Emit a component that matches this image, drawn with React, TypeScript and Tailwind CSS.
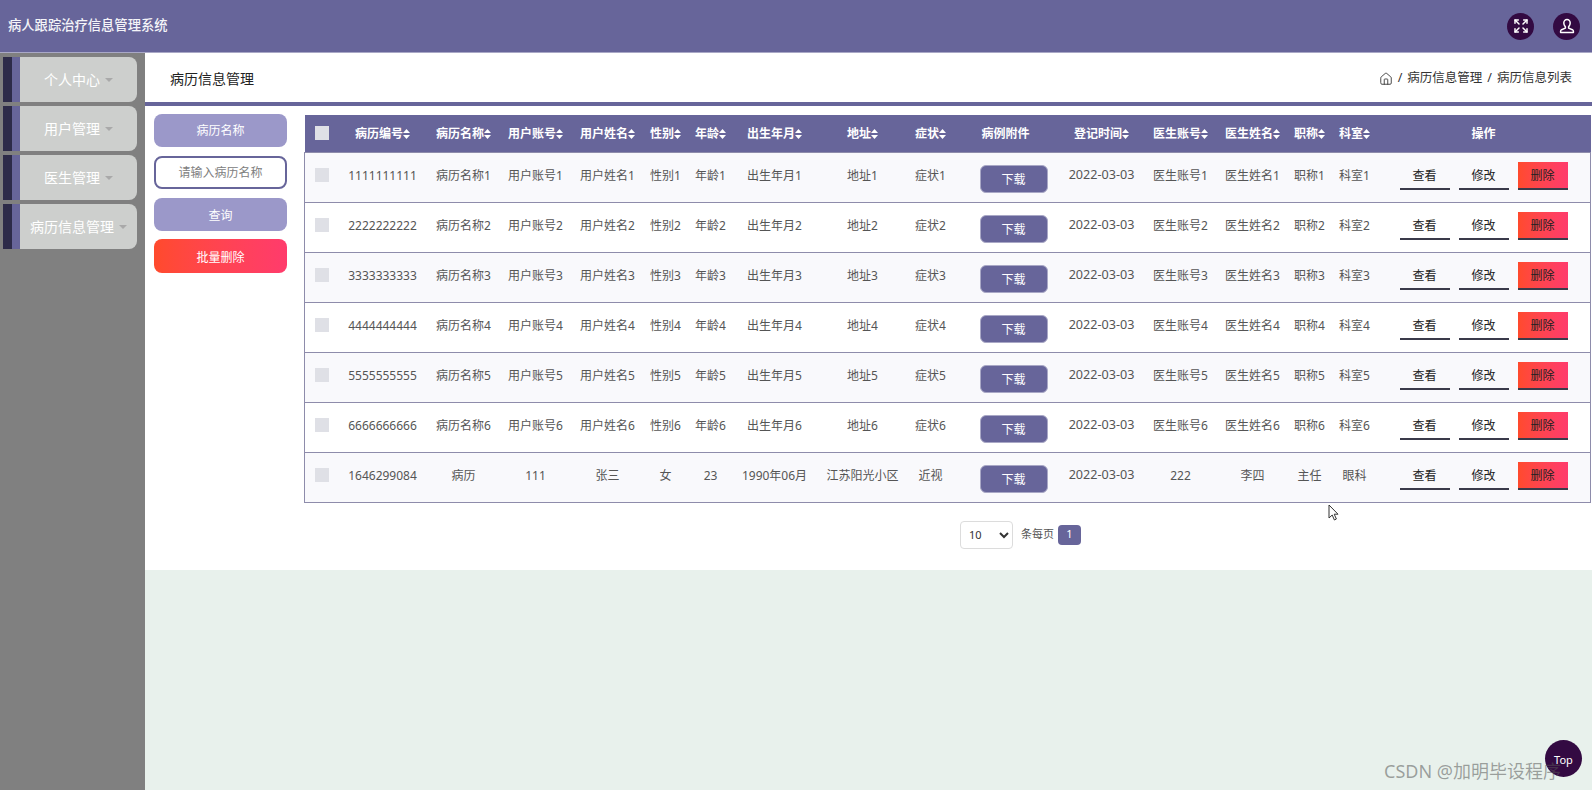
import { Expand, House } from 'lucide-react';

const font = "font-['Noto_Sans','Noto_Sans_CJK_SC',sans-serif]";

const menus = ['个人中心', '用户管理', '医生管理', '病历信息管理'];

const heads = [
  { name: '病历编号', w: 'w-[88px]', sort: true },
  { name: '病历名称', w: 'w-[74px]', sort: true },
  { name: '用户账号', w: 'w-[70px]', sort: true },
  { name: '用户姓名', w: 'w-[74px]', sort: true },
  { name: '性别', w: 'w-[42px]', sort: true },
  { name: '年龄', w: 'w-[48px]', sort: true },
  { name: '出生年月', w: 'w-[80px]', sort: true },
  { name: '地址', w: 'w-[96px]', sort: true },
  { name: '症状', w: 'w-[40px]', sort: true },
  { name: '病例附件', w: 'w-[110px]', sort: false },
  { name: '登记时间', w: 'w-[82px]', sort: true },
  { name: '医生账号', w: 'w-[76px]', sort: true },
  { name: '医生姓名', w: 'w-[68px]', sort: true },
  { name: '职称', w: 'w-[46px]', sort: true },
  { name: '科室', w: 'w-[44px]', sort: true },
];

type Row = {
  no: string;
  name: string;
  account: string;
  user: string;
  sex: string;
  age: string;
  birth: string;
  addr: string;
  symptom: string;
  doctorNo: string;
  doctor: string;
  title: string;
  dept: string;
};

const rows: Row[] = [1, 2, 3, 4, 5, 6].map((n) => ({
  no: String(n).repeat(10),
  name: `病历名称${n}`,
  account: `用户账号${n}`,
  user: `用户姓名${n}`,
  sex: `性别${n}`,
  age: `年龄${n}`,
  birth: `出生年月${n}`,
  addr: `地址${n}`,
  symptom: `症状${n}`,
  doctorNo: `医生账号${n}`,
  doctor: `医生姓名${n}`,
  title: `职称${n}`,
  dept: `科室${n}`,
}));

rows.push({
  no: '1646299084',
  name: '病历',
  account: '111',
  user: '张三',
  sex: '女',
  age: '23',
  birth: '1990年06月',
  addr: '江苏阳光小区',
  symptom: '近视',
  doctorNo: '222',
  doctor: '李四',
  title: '主任',
  dept: '眼科',
});

const SortIcon = () => (
  <svg viewBox="0 0 7 10" className="inline-block w-[7px] h-[10px] align-[-1px]" fill="currentColor">
    <path d="M3.5 0 7 4H0Z" />
    <path d="M3.5 10 0 6H7Z" />
  </svg>
);

const Cell = ({ children }: { children: React.ReactNode }) => (
  <td className="pb-[3px] text-center whitespace-nowrap overflow-visible">{children}</td>
);

const Sidebar = () => (
  <aside className="w-[145px] shrink-0 bg-[#808080] pt-1 pl-[3px] flex flex-col gap-[4px]">
    {menus.map((m) => (
      <div key={m} className="w-[134px] h-[45px] flex">
        <div className="w-[9px] bg-[#2d2b49]" />
        <div className="w-2 bg-[#67659a]" />
        <div className="flex-1 bg-[#cdcfcd] rounded-r-lg flex items-center justify-center gap-[5px] text-sm text-white">
          {m}
          <span className="w-0 h-0 border-x-4 border-t-4 border-x-transparent border-t-[#a9a9a9]" />
        </div>
      </div>
    ))}
  </aside>
);

const App = () => {
  return (
    <div className={`${font} relative w-[1592px] h-[790px] overflow-hidden flex flex-col text-xs`}>
      <header className="h-[53px] shrink-0 bg-[#67659a] border-b border-[#a9a8c6] flex items-center justify-between pl-2 pr-[12px] text-white">
        <h1 className="text-[13.3px] font-medium text-[#f4f4f8]">病人跟踪治疗信息管理系统</h1>
        <div className="flex items-center gap-[19px]">
          <div className="w-[27px] h-[27px] rounded-full bg-[#330a42] flex items-center justify-center">
            <Expand size={16} strokeWidth={2.2} />
          </div>
          <div className="w-[27px] h-[27px] rounded-full bg-[#330a42] flex items-center justify-center">
            <svg viewBox="0 0 16 16" className="w-4 h-4" fill="none" stroke="currentColor" strokeWidth="1.5" strokeLinejoin="round">
              <path d="M8 1.5a3.2 3.6 0 0 1 3.2 3.6c0 1.6-.8 3-1.6 3.8v1.2l3.8 1.6c.6.3 1 .8 1 1.5v1.3H1.6v-1.3c0-.7.4-1.2 1-1.5l3.8-1.6V8.9C5.6 8.1 4.8 6.7 4.8 5.1A3.2 3.6 0 0 1 8 1.5z" />
            </svg>
          </div>
        </div>
      </header>

      <div className="flex-1 flex min-h-0">
        <Sidebar />

        <main className="flex-1 bg-[#e8f1ec] min-w-0">
          <div className="h-[517px] bg-white">
            <div className="h-[53px] border-b-4 border-[#67659a] flex items-center justify-between pt-[2px] pl-[25px] pr-5">
              <h2 className="text-sm text-[#222]">病历信息管理</h2>
              <div className="flex items-center gap-[5px] text-[12.5px] text-[#333]">
                <House size={14} strokeWidth={1.5} />
                <span>/</span>
                <span>病历信息管理</span>
                <span>/</span>
                <span>病历信息列表</span>
              </div>
            </div>

            <div className="flex pl-[9px] pt-2">
              <div className="w-[133px] shrink-0 flex flex-col gap-[9px] text-white">
                <div className="h-[33px] pt-px rounded-lg bg-[#9b98c9] flex items-center justify-center">病历名称</div>
                <input
                  placeholder="请输入病历名称"
                  className="h-[33px] w-full rounded-lg border-2 border-[#67659a] bg-white text-center text-xs outline-none placeholder:text-[#808080]"
                />
                <button className="h-[33px] pt-[2px] rounded-lg bg-[#9b98c9] text-xs text-white">查询</button>
                <button className="h-[34px] -mt-px pt-[3px] rounded-lg bg-gradient-to-r from-[#ff4a2c] to-[#ff3b6c] text-xs text-white">
                  批量删除
                </button>
              </div>

              <div className="ml-[17px] mt-[1px]">
                <table className="table-fixed w-[1286px] border-collapse text-[#555]">
                  <thead>
                    <tr className="h-[37px] bg-[#67659a] text-white">
                      <th className="w-[34px]">
                        <span className="block w-[14px] h-[14px] ml-[10px] bg-[#dfe0e6]" />
                      </th>
                      {heads.map((h) => (
                        <th key={h.name} className={`${h.w} pt-px font-bold whitespace-nowrap text-center`}>
                          {h.name}
                          {h.sort && <SortIcon />}
                        </th>
                      ))}
                      <th className="w-[214px] pt-px font-bold">操作</th>
                    </tr>
                  </thead>
                  <tbody>
                    {rows.map((r, i) => (
                      <tr
                        key={r.no}
                        className={`h-[50px] border border-[#8e8cab] ${i % 2 === 0 ? 'bg-[#f9f9fc]' : 'bg-white'}`}
                      >
                        <td className="pb-1">
                          <span className="block w-[14px] h-[14px] ml-[10px] bg-[#dfe0e6]" />
                        </td>
                        <Cell>{r.no}</Cell>
                        <Cell>{r.name}</Cell>
                        <Cell>{r.account}</Cell>
                        <Cell>{r.user}</Cell>
                        <Cell>{r.sex}</Cell>
                        <Cell>{r.age}</Cell>
                        <Cell>{r.birth}</Cell>
                        <Cell>{r.addr}</Cell>
                        <Cell>{r.symptom}</Cell>
                        <td className="pt-1">
                          <button className="block w-[68px] h-[28px] pt-[2px] ml-[29px] rounded-md border border-[#a9a8c6] bg-[#67659a] text-xs text-white">
                            下载
                          </button>
                        </td>
                        <Cell>
                          <span className="text-[12.6px]">2022-03-03</span>
                        </Cell>
                        <Cell>{r.doctorNo}</Cell>
                        <Cell>{r.doctor}</Cell>
                        <Cell>{r.title}</Cell>
                        <Cell>{r.dept}</Cell>
                        <td className="pl-[23px] pb-[2px]">
                          <div className="flex gap-[9px] text-[#222]">
                            <button className="w-[50px] h-[28px] pt-[2px] border-b-2 border-[#3a3a4a] text-xs">查看</button>
                            <button className="w-[50px] h-[28px] pt-[2px] border-b-2 border-[#3a3a4a] text-xs">修改</button>
                            <button className="w-[50px] h-[28px] pt-[2px] border-b-2 border-[#3a3a4a] bg-gradient-to-r from-[#ff4a2c] to-[#ff3b6c] text-xs">
                              删除
                            </button>
                          </div>
                        </td>
                      </tr>
                    ))}
                  </tbody>
                </table>

                <div className="mt-[18px] ml-[656px] flex items-center text-[#555]">
                  <select className="w-[53px] h-[28px] rounded border border-[#dcdcdc] bg-white text-[11px] text-[#333] pl-1 outline-none">
                    <option>10</option>
                    <option>20</option>
                  </select>
                  <span className="ml-2 text-[11px]">条每页</span>
                  <span className="ml-[4px] w-[23px] h-5 rounded bg-[#67659a] text-white text-[11px] flex items-center justify-center">
                    1
                  </span>
                </div>
              </div>
            </div>
          </div>
        </main>
      </div>

      {/* mouse pointer captured in the screenshot */}
      <svg viewBox="0 0 12 18" className="absolute left-[1328px] top-[504px] w-[12px] h-[18px]" fill="white" stroke="#333" strokeWidth="1">
        <path d="M1 1v13l3.2-3 2.2 5 2-1-2.2-4.8H10Z" />
      </svg>

      <div className="absolute left-[1545px] top-[740px] w-[37px] h-[37px] rounded-full bg-[#330a42] text-white text-[11px] flex items-center justify-center pt-[3px]">
        Top
      </div>

      <div className="absolute left-[1384px] top-[758px] text-[18px] leading-[27px] text-[#55555588] whitespace-nowrap">
        CSDN @加明毕设程序
      </div>
    </div>
  );
};

export default App;
